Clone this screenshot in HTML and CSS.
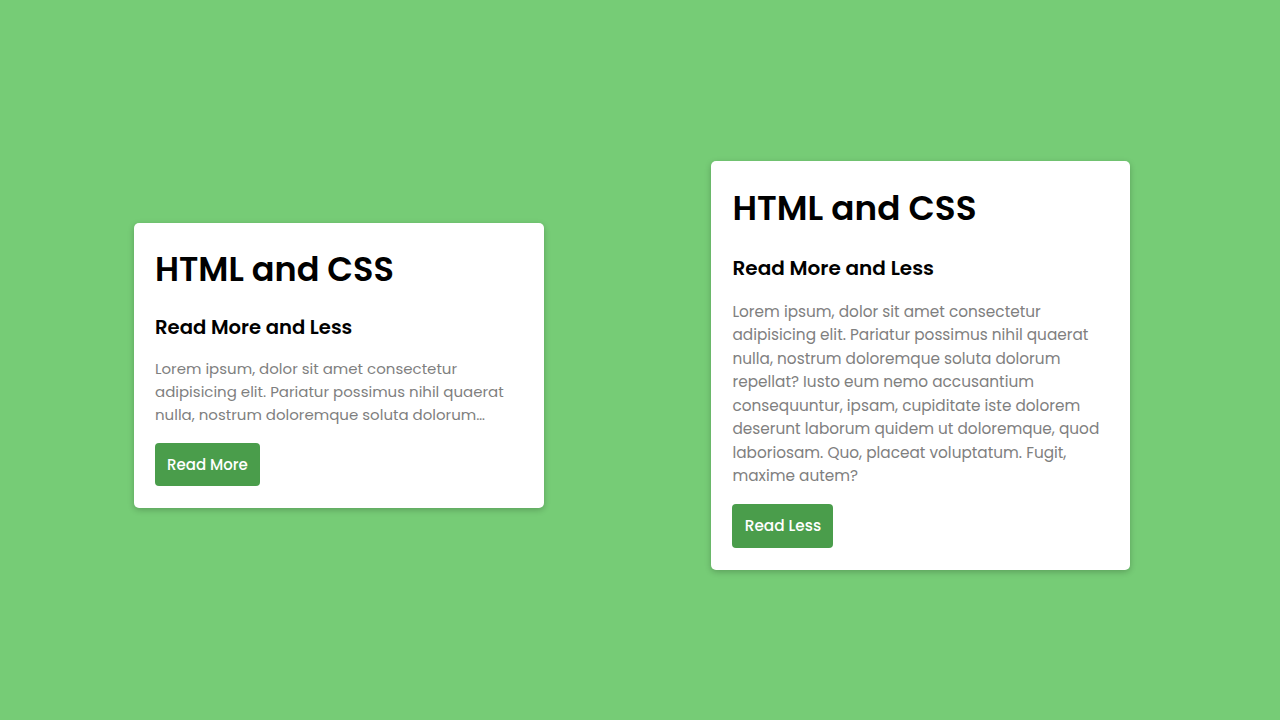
FILE: index.html
```html
<!DOCTYPE html>
<html lang="en">
<head>
  <meta charset="UTF-8">
  <meta name="viewport" content="width=device-width, initial-scale=1.0">
  <title>Read More and Less</title>
  <link rel="stylesheet" href="styles.css">
</head>
<body>
  <div class="wrapper">
    <!-- collapsed card -->
    <div class="card card-short">
      <h1>HTML and CSS</h1>
      <h3>Read More and Less</h3>
      <p class="text clamp">Lorem ipsum, dolor sit amet consectetur adipisicing elit. Pariatur possimus nihil quaerat nulla, nostrum doloremque soluta dolorum repellat? Iusto eum nemo accusantium consequuntur, ipsam, cupiditate iste dolorem deserunt laborum quidem ut doloremque, quod laboriosam. Quo, placeat voluptatum. Fugit, maxime autem?</p>
      <button class="btn">Read More</button>
    </div>

    <!-- expanded card -->
    <div class="card card-long">
      <h1>HTML and CSS</h1>
      <h3>Read More and Less</h3>
      <p class="text">Lorem ipsum, dolor sit amet consectetur adipisicing elit. Pariatur possimus nihil quaerat nulla, nostrum doloremque soluta dolorum repellat? Iusto eum nemo accusantium consequuntur, ipsam, cupiditate iste dolorem deserunt laborum quidem ut doloremque, quod laboriosam. Quo, placeat voluptatum. Fugit, maxime autem?</p>
      <button class="btn">Read Less</button>
    </div>
  </div>
</body>
</html>
```

FILE: styles.css
```css
* {
  box-sizing: border-box;
}
body {
  margin: 0;
  font-family: Poppins, Inter, "Noto Sans", sans-serif;
  background: #76cc76;
}
.wrapper {
  min-height: 100vh;
  display: flex;
  align-items: center;
  padding: 11px 0 0 134px;
  gap: 167px;
}
/* all card sizes are in em so the second card can be a bit larger */
.card {
  width: 25.625em;
  background: white;
  border-radius: 5px;
  padding: 1.375em 1.3125em;
  box-shadow: 0 2px 6px rgba(0,0,0,0.22);
}
.card-short {
  font-size: 16px;
}
.card-long {
  font-size: 16.35px;
}
.card h1 {
  margin: 0;
  font-size: 2.09375em;
  font-weight: 600;
  line-height: 1.5;
  color: #000;
}
.card h3 {
  margin: 0.906em 0 0;
  font-size: 1.225em;
  font-weight: 600;
  line-height: 1.5;
  color: #000;
}
.text {
  margin: 1.1em 0 0;
  font-size: 0.9375em;
  line-height: 1.533;
  color: #7f7f7f;
}
.clamp {
  display: -webkit-box;
  -webkit-line-clamp: 3;
  -webkit-box-orient: vertical;
  overflow: hidden;
}
.btn {
  display: block;
  margin-top: 1.067em;
  background: #4a9d4b;
  color: white;
  border: none;
  padding: 0 0.8em;
  height: 2.867em;
  border-radius: 4px;
  font-family: inherit;
  font-size: 0.9375em;
  font-weight: 500;
  cursor: pointer;
}
```
